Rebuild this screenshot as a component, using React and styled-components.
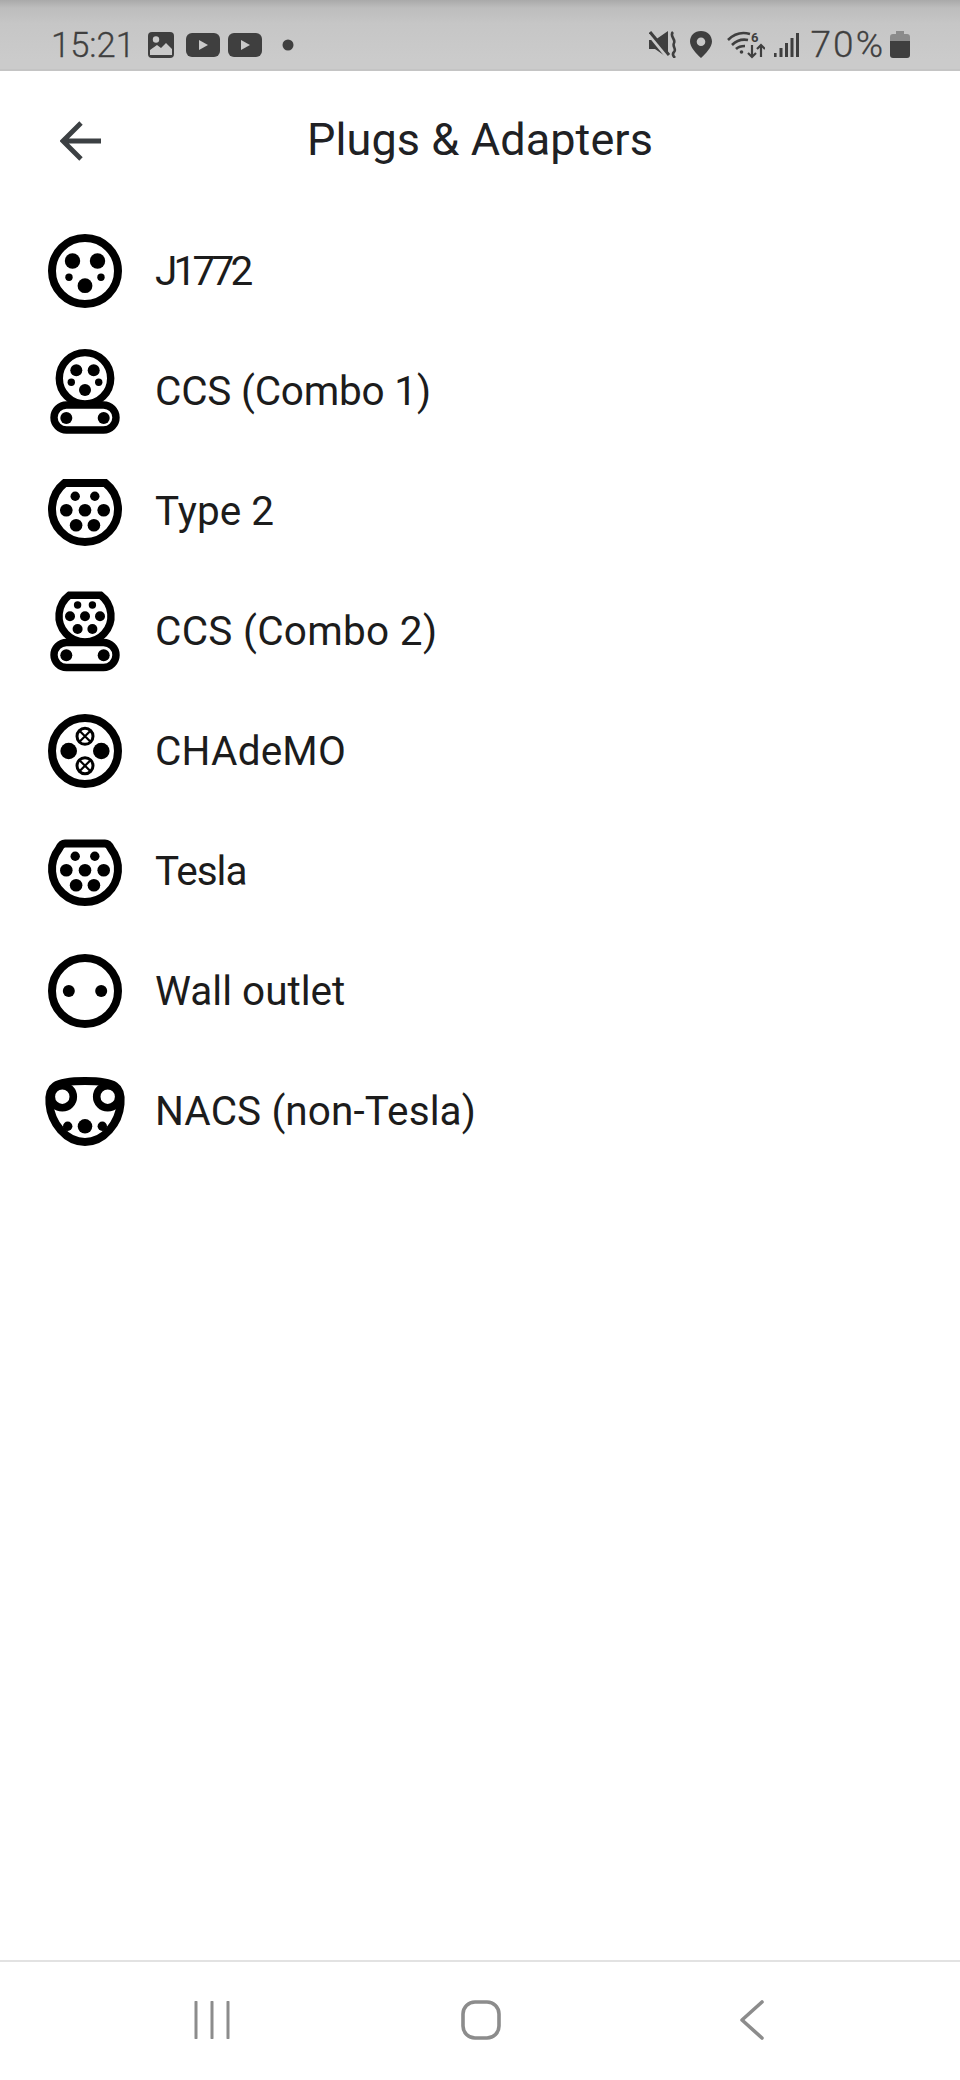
import React from 'react';
import styled, { createGlobalStyle } from 'styled-components';

const INK = '#000';
const STATUS_INK = '#3f3f3f';

const GlobalStyle = createGlobalStyle`
  html, body {
    margin: 0;
    padding: 0;
    background: #fff;
  }
  * {
    box-sizing: border-box;
  }
`;

const Page = styled.div`
  display: flex;
  flex-direction: column;
  width: 960px;
  height: 2080px;
  background: #fff;
  font-family: Roboto, "Liberation Sans", sans-serif;
`;

const StatusBar = styled.div`
  display: flex;
  justify-content: space-between;
  align-items: center;
  flex: none;
  height: 71px;
  padding: 20px 50px 0 51px;
  background: linear-gradient(#a9a9a9 0, #bdbdbd 8px, #c6c6c6 24px, #cbcbcb 60px);
  border-bottom: 2px solid #c4c4c4;
  color: ${STATUS_INK};
`;

const StatusGroup = styled.div`
  display: flex;
  align-items: center;
`;

const StatusText = styled.span`
  margin-left: ${props => props.$left || 0}px;
  font-size: ${props => props.$size}px;
  font-weight: 300;
  line-height: 30px;
  letter-spacing: ${props => props.$spacing}px;
  -webkit-text-stroke: 0.3px ${STATUS_INK};
`;

const StatusIcon = styled.svg`
  display: block;
  flex: none;
  margin-left: ${props => props.$left || 0}px;
  color: ${STATUS_INK};
`;

const Header = styled.header`
  display: grid;
  grid-template-columns: 1fr auto 1fr;
  align-items: center;
  flex: none;
  height: 140px;
  padding-left: 60px;
`;

const BackIcon = styled.svg`
  display: block;
  color: #3c4043;
`;

const Title = styled.h1`
  margin: 0 0 3px -60px;
  font-size: 45px;
  font-weight: 400;
  letter-spacing: 0.1px;
  color: #202124;
`;

const PlugList = styled.ul`
  display: flex;
  flex-direction: column;
  flex: 1;
  margin: 0;
  padding: 0 0 0 41px;
  list-style: none;
`;

const PlugRow = styled.li`
  display: flex;
  align-items: center;
  gap: 26px;
  height: 120px;
`;

const PlugIcon = styled.svg`
  display: block;
  flex: none;
  width: 88px;
  height: 88px;
`;

const PlugName = styled.span`
  font-size: 40.5px;
  font-weight: 400;
  letter-spacing: ${props => props.$tracking || 0}px;
  color: #1c1c1c;
`;

const NavBar = styled.nav`
  display: flex;
  align-items: center;
  flex: none;
  height: 120px;
  padding: 0 0 2px 194px;
  border-top: 2px solid #e2e2e2;
  color: #8c8c8c;
`;

const NavIcon = styled.svg`
  display: block;
  margin-left: ${props => props.$left || 0}px;
`;

const Pin = ({ x, y, r }) => <circle cx={x} cy={y} r={r} fill={INK} />;

const Mirror = ({ x, y, r }) => (
  <>
    <Pin x={-x} y={y} r={r} />
    <Pin x={x} y={y} r={r} />
  </>
);

const Outline = ({ d, width = 8 }) => (
  <path d={d} fill="none" stroke={INK} strokeWidth={width} />
);

const Ring = () => <circle cx="0" cy="0" r="33" fill="none" stroke={INK} strokeWidth="8" />;

// the DC part shared by both combo plugs
const ComboBase = ({ y, pinY }) => (
  <>
    <rect x="-31" y={y} width="62" height="25" rx="12.5" fill="#fff" stroke={INK} strokeWidth="7.4" />
    <Mirror x={18.7} y={pinY} r={6} />
  </>
);

const J1772 = () => (
  <>
    <Ring />
    <Mirror x={12.5} y={-10} r={7.7} />
    <Mirror x={16} y={6.3} r={3.7} />
    <Pin x={0} y={14.7} r={7.4} />
  </>
);

const Combo1 = () => (
  <>
    <circle cx="0" cy="-12.7" r="25.7" fill="none" stroke={INK} strokeWidth="7.4" />
    <Mirror x={8.7} y={-20.7} r={6} />
    <Mirror x={13.7} y={-8.7} r={3.7} />
    <Pin x={0} y={-1} r={6} />
    <ComboBase y={14} pinY={27} />
  </>
);

const SevenPins = () => (
  <>
    <Mirror x={9.8} y={-14.7} r={4.7} />
    <Mirror x={18.7} y={-0.7} r={6.3} />
    <Pin x={0} y={-0.7} r={6.3} />
    <Mirror x={8.9} y={14.3} r={6.3} />
  </>
);

const Type2 = () => (
  <>
    <Outline d="M-20.3,-28 H20.3 A33,33 0 1 1 -20.3,-28 Z" />
    <SevenPins />
  </>
);

const Combo2 = () => (
  <>
    <Outline d="M-15.7,-35.7 H15.7 A26,26 0 1 1 -15.7,-35.7 Z" width={7.4} />
    <Mirror x={7.4} y={-26} r={3.7} />
    <Mirror x={15} y={-14.7} r={5} />
    <Pin x={0} y={-14.7} r={5} />
    <Mirror x={7.4} y={-2} r={5} />
    <ComboBase y={11.5} pinY={24.3} />
  </>
);

const CrossPin = ({ y }) => (
  <g transform={`translate(0 ${y})`}>
    <circle r="8" fill="#fff" stroke={INK} strokeWidth="3" />
    <path d="M-5.5,-5.5 L5.5,5.5 M5.5,-5.5 L-5.5,5.5" stroke={INK} strokeWidth="2.2" />
  </g>
);

const Chademo = () => (
  <>
    <Ring />
    <Mirror x={16.3} y={0} r={8.3} />
    <CrossPin y={-14.7} />
    <CrossPin y={14.7} />
  </>
);

const Tesla = () => (
  <>
    <Outline d="M-20,-27.5 H20 Q23.5,-27.5 26,-22.3 A33,33 0 1 1 -26,-22.3 Q-23.5,-27.5 -20,-27.5 Z" />
    <SevenPins />
  </>
);

const WallOutlet = () => (
  <>
    <Ring />
    <Mirror x={16.2} y={0} r={6} />
  </>
);

const NacsRing = ({ x }) => (
  <circle cx={x} cy="-14.3" r="11" fill="#fff" stroke={INK} strokeWidth="7.6" />
);

const Nacs = () => (
  <>
    <Outline d="M0,-30 C13,-30 24,-29 30,-25 C36,-21 36,-12 35.5,-7 C34,12 19,31 0,31 C-19,31 -34,12 -35.5,-7 C-36,-12 -36,-21 -30,-25 C-24,-29 -13,-30 0,-30 Z" />
    <NacsRing x={-22.7} />
    <NacsRing x={22.7} />
    <Mirror x={17.3} y={15.3} r={4.7} />
    <Pin x={0} y={15.3} r={7.3} />
  </>
);

// tracking makes up for the small width differences with the reference font
const PLUGS = [
  { name: 'J1772', Drawing: J1772, tracking: -3.8 },
  { name: 'CCS (Combo 1)', Drawing: Combo1, tracking: -0.2 },
  { name: 'Type 2', Drawing: Type2 },
  { name: 'CCS (Combo 2)', Drawing: Combo2, tracking: 0.3 },
  { name: 'CHAdeMO', Drawing: Chademo, tracking: 0.2 },
  { name: 'Tesla', Drawing: Tesla, tracking: -1 },
  { name: 'Wall outlet', Drawing: WallOutlet },
  { name: 'NACS (non-Tesla)', Drawing: Nacs, tracking: 0.1 },
];

const GalleryIcon = () => (
  <StatusIcon $left={12} width="28" height="28" viewBox="0 0 28 28">
    <rect x="1" y="1" width="26" height="26" rx="4" fill="currentColor" />
    <path d="M3 24 V19 L10 14 L14 17 L19 12 L25 18 V24 Z" fill="#cacaca" />
    <circle cx="9" cy="8.5" r="3.2" fill="#cacaca" />
  </StatusIcon>
);

const PlayIcon = ({ left }) => (
  <StatusIcon $left={left} width="34" height="24" viewBox="0 0 34 24">
    <rect width="34" height="24" rx="6" fill="currentColor" />
    <path d="M13 7 L22 12 L13 17 Z" fill="#cacaca" />
  </StatusIcon>
);

const MuteIcon = () => (
  <StatusIcon width="28" height="27" viewBox="0 0 28 27">
    <path d="M0 9 H6 L19 0 V27 L6 18 H0 Z" fill="currentColor" />
    <path d="M-1 1 L20 27" stroke="#cacaca" strokeWidth="5" />
    <path d="M1 1 L20 24" stroke="currentColor" strokeWidth="3" />
    <path d="M24 1 C20 5 27 8 25 12 C23 16 28 18 25 21 C23 23 24 25 26 27" fill="none" stroke="currentColor" strokeWidth="2.6" />
  </StatusIcon>
);

const LocationIcon = () => (
  <StatusIcon $left={13} width="22" height="27" viewBox="0 0 22 27">
    <path fillRule="evenodd" d="M11 0 C17.5 0 22 4.6 22 10.6 C22 16 16 22.5 11 27 C6 22.5 0 16 0 10.6 C0 4.6 4.5 0 11 0 Z M11 6.5 A4.3 4.3 0 1 0 11 15.1 A4.3 4.3 0 1 0 11 6.5 Z" fill="currentColor" />
  </StatusIcon>
);

const WifiIcon = () => (
  <StatusIcon $left={15} width="38" height="28" viewBox="0 0 38 28">
    <path d="M1 9 C8 2 16 1 23 3 M5 14 C10 9 16 8 21 9 M9 18 C12 15 15 15 18 15" fill="none" stroke="currentColor" strokeWidth="2.6" />
    <circle cx="14.5" cy="21" r="1.8" fill="currentColor" />
    <text x="24" y="11" fontFamily="Roboto, sans-serif" fontSize="13" fontWeight="700" fill="currentColor">6</text>
    <path d="M25 14 V26 M21 22 L25 26 L29 22 M34 26 V14 M30 18 L34 14 L38 18" fill="none" stroke="currentColor" strokeWidth="2.2" />
  </StatusIcon>
);

const SignalIcon = () => (
  <StatusIcon $left={9} width="25" height="26" viewBox="0 0 25 26">
    <rect x="0" y="21" width="2.6" height="4" fill="currentColor" />
    <rect x="5.5" y="16" width="3" height="9" fill="currentColor" />
    <rect x="11" y="11" width="3" height="14" fill="currentColor" />
    <rect x="16.5" y="6" width="3" height="19" fill="currentColor" />
    <rect x="22" y="1" width="3" height="24" fill="currentColor" />
  </StatusIcon>
);

const BatteryIcon = () => (
  <StatusIcon $left={5} width="20" height="27" viewBox="0 0 20 27">
    <path d="M6 0 H14 V3 H17 Q20 3 20 6 V10 H0 V6 Q0 3 3 3 H6 Z" fill="#8b8b8b" />
    <path d="M0 10 H20 V24 Q20 27 17 27 H3 Q0 27 0 24 Z" fill="currentColor" />
  </StatusIcon>
);

export default function App() {
  return (
    <Page>
      <GlobalStyle />
      <StatusBar>
        <StatusGroup>
          <StatusText $size={34.5} $spacing={0}>15:21</StatusText>
          <GalleryIcon />
          <PlayIcon left={11} />
          <PlayIcon left={8} />
          <StatusIcon $left={20} width="12" height="12" viewBox="0 0 12 12">
            <circle cx="6" cy="6" r="5.5" fill="currentColor" />
          </StatusIcon>
        </StatusGroup>
        <StatusGroup>
          <MuteIcon />
          <LocationIcon />
          <WifiIcon />
          <SignalIcon />
          <StatusText $left={12} $size={37} $spacing={2}>70%</StatusText>
          <BatteryIcon />
        </StatusGroup>
      </StatusBar>
      <Header>
        <BackIcon width="42" height="42" viewBox="0 0 42 42">
          <path d="M41 21 H4 M21 3 L3 21 L21 39" fill="none" stroke="currentColor" strokeWidth="4.8" />
        </BackIcon>
        <Title>Plugs &amp; Adapters</Title>
        <span />
      </Header>
      <PlugList>
        {PLUGS.map(({ name, Drawing, tracking }) => (
          <PlugRow key={name}>
            <PlugIcon viewBox="-44 -44 88 88">
              <Drawing />
            </PlugIcon>
            <PlugName $tracking={tracking}>{name}</PlugName>
          </PlugRow>
        ))}
      </PlugList>
      <NavBar>
        <NavIcon width="36" height="38" viewBox="0 0 36 38">
          <path d="M2 1 V37 M18 1 V37 M34 1 V37" fill="none" stroke="currentColor" strokeWidth="3" strokeLinecap="round" />
        </NavIcon>
        <NavIcon $left={231} width="40" height="40" viewBox="0 0 40 40">
          <rect x="2" y="2" width="36" height="36" rx="12" fill="none" stroke="currentColor" strokeWidth="3.6" />
        </NavIcon>
        <NavIcon $left={238} width="26" height="40" viewBox="0 0 26 40">
          <path d="M23 2 L3 20 L23 38" fill="none" stroke="currentColor" strokeWidth="3.6" strokeLinecap="round" strokeLinejoin="round" />
        </NavIcon>
      </NavBar>
    </Page>
  );
}
